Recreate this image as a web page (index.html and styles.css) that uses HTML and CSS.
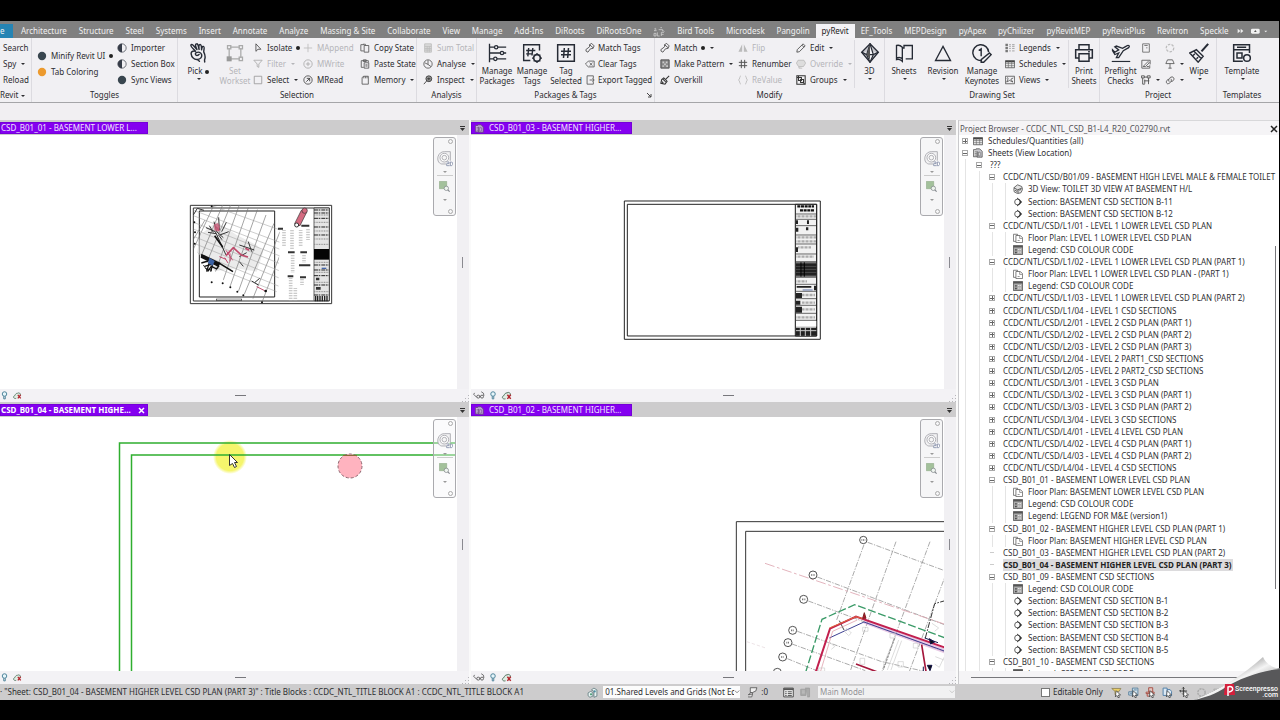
FILE: index.html
```html
<!DOCTYPE html>
<html lang="en">
<head>
<meta charset="utf-8">
<title>Revit - CCDC_NTL_CSD</title>
<link rel="stylesheet" href="styles.css">
</head>
<body>
<svg class="defs" aria-hidden="true">
  <symbol id="half" viewBox="0 0 24 24"><circle cx="12" cy="12" r="10" fill="none" stroke="#555a63" stroke-width="2"/><path d="M12 2a10 10 0 0 0 0 20z" fill="#363c48"/></symbol>
  <symbol id="dark" viewBox="0 0 24 24"><circle cx="12" cy="12" r="10" fill="#39464f"/></symbol>
  <symbol id="orange" viewBox="0 0 24 24"><circle cx="12" cy="12" r="10" fill="#ec9a2e"/></symbol>
  <symbol id="pick" viewBox="0 0 48 56"><path d="M17 23C11 16 3 11 4 6c2-4 6-1 9 3l8 9C17 10 15 3 20 2c4-1 5 8 7 16-1-9-1-14 3-14s4 7 4 15c1-7 3-11 6-9 3 1 0 9 0 15 3 6 5 14 3 20-1 3-1 5 0 8M17 23C8 21 4 25 5 31c1 9 8 16 17 15 9 0 14-7 12-14-2-6-9-8-15-5-4 2-2 8 2 8 3 0 5-1 6-3M22 46l6 5" fill="none" stroke="#262b35" stroke-width="4" stroke-linecap="round" stroke-linejoin="round"/></symbol>
  <symbol id="workset" viewBox="0 0 24 24"><path d="M5 6v12M19 6v12M6 5h12M6 19h12M3 3h4v4H3zM17 3h4v4h-4zM17 17h4v4h-4z" fill="none" stroke="#aaa" stroke-width="1.5"/><path d="M2 16h6v6H2z" fill="#999"/></symbol>
  <symbol id="arrow" viewBox="0 0 24 24"><path d="M7 2v18l5-5h7z" fill="none" stroke="#444" stroke-width="2"/></symbol>
  <symbol id="filter" viewBox="0 0 24 24"><path d="M2 3h20l-8 9v8l-4-2v-6z" fill="none" stroke="#aaa" stroke-width="2"/></symbol>
  <symbol id="box" viewBox="0 0 24 24"><path d="M3 3h18v18H3z" fill="none" stroke="#999" stroke-width="2"/></symbol>
  <symbol id="plus" viewBox="0 0 24 24"><path d="M12 2v20M2 12h20" stroke="#bbb" stroke-width="2"/></symbol>
  <symbol id="cplus" viewBox="0 0 24 24"><circle cx="12" cy="12" r="10" fill="none" stroke="#aaa" stroke-width="2"/><path d="M12 7v10M7 12h10" stroke="#aaa" stroke-width="2"/></symbol>
  <symbol id="cread" viewBox="0 0 24 24"><circle cx="12" cy="12" r="10" fill="none" stroke="#444" stroke-width="2"/><path d="M8 16l8-8M9 8h7v7" fill="none" stroke="#333" stroke-width="2"/></symbol>
  <symbol id="copy" viewBox="0 0 24 24"><path d="M9 4H2v15h7M10 6h11v16H10zM7 3h6v3" fill="none" stroke="#555" stroke-width="2"/></symbol>
  <symbol id="paste" viewBox="0 0 24 24"><path d="M9 20H3V4h17v4M8 2h7v4H8zM10 9h11v13H10zM13 14h5M13 17h5" fill="none" stroke="#555" stroke-width="2"/></symbol>
  <symbol id="memory" viewBox="0 0 24 24"><path d="M5 6l4-3h11v19H5zM9 3v5M13 3v5M17 3v5" fill="none" stroke="#555" stroke-width="2"/></symbol>
  <symbol id="sum" viewBox="0 0 24 24"><path d="M4 2h16v20H4zM4 8h16M10 8v14M15 8v14M4 13h16M4 17h16" fill="#ddd" stroke="#bbb" stroke-width="2"/></symbol>
  <symbol id="analyse" viewBox="0 0 24 24"><circle cx="12" cy="12" r="10" fill="none" stroke="#555" stroke-width="2"/><path d="M12 3v10l7 5M12 13l-8-4" fill="none" stroke="#555" stroke-width="2"/></symbol>
  <symbol id="inspect" viewBox="0 0 24 24"><circle cx="14" cy="9" r="7" fill="#999" stroke="#333" stroke-width="2"/><path d="M9 14l-7 8M10 9h8M14 6v7" stroke="#333" stroke-width="2"/></symbol>
  <symbol id="packages" viewBox="0 0 24 24"><path d="M3 1v22M3 5h20M3 12h20M3 19h20" stroke="#262b35" stroke-width="1.6"/><g fill="#f1f0f3" stroke="#262b35" stroke-width="1.5"><circle cx="11" cy="5" r="2"/><circle cx="18" cy="12" r="2"/><circle cx="10" cy="19" r="2"/></g></symbol>
  <symbol id="mtags" viewBox="0 0 24 24"><path d="M10 21H2V2h19v7M8 6L7 16M13 6l-1 9M5 9h11M5 13h8" fill="none" stroke="#262b35" stroke-width="1.7"/><circle cx="18" cy="18" r="4" fill="none" stroke="#262b35" stroke-width="2"/><path d="M18 12v2M18 22v2M12 18h2M22 18h2M14 14l1 1M21 21l1 1M14 22l1-1M21 15l1-1" stroke="#262b35" stroke-width="1.5"/></symbol>
  <symbol id="tagsel" viewBox="0 0 24 24"><path d="M2 2h20v20H2zM10 6L9 18M15 6l-1 12M6 10h12M6 14h12" fill="none" stroke="#262b35" stroke-width="1.8"/></symbol>
  <symbol id="brush" viewBox="0 0 24 24"><path d="M11 4l5-3 6 6-3 6-6 1-6 8-4-2-1-4 9-7zM11 4l9 8" fill="none" stroke="#444" stroke-width="2"/></symbol>
  <symbol id="clear" viewBox="0 0 24 24"><path d="M8 5h14v14H8l-7-7zM11 9l7 7M18 9l-7 7" fill="none" stroke="#555" stroke-width="2"/></symbol>
  <symbol id="export" viewBox="0 0 24 24"><path d="M20 9V2H5v20h15v-7M11 12h11M18 8l4 4-4 4" fill="none" stroke="#555" stroke-width="2"/></symbol>
  <symbol id="pattern" viewBox="0 0 24 24"><path d="M2 2h20v20H2z" fill="#888" stroke="#444" stroke-width="2"/><path d="M6 6h4v4H6zM14 6h4v4h-4zM10 11h4v4h-4zM6 15h3v4H6zM15 15h4v4h-4z" fill="#ccc"/></symbol>
  <symbol id="broom" viewBox="0 0 24 24"><path d="M22 2l-8 8M9 7l8 8-5 7-10-2 2-9zM7 10l8 8M5 16l3 4" fill="none" stroke="#333" stroke-width="2.5"/></symbol>
  <symbol id="flip" viewBox="0 0 24 24"><path d="M10 3v18H1zM14 3v18h9z" fill="#bbb"/></symbol>
  <symbol id="hash" viewBox="0 0 24 24"><path d="M8 2v20M16 2v20M2 8h20M2 16h20" stroke="#555" stroke-width="2.4"/></symbol>
  <symbol id="braces" viewBox="0 0 24 24"><path d="M7 2C3 2 5 12 1 12c4 0 2 10 6 10M17 2c4 0 2 10 6 10-4 0-2 10-6 10" fill="none" stroke="#bbb" stroke-width="2"/></symbol>
  <symbol id="pencil" viewBox="0 0 24 24"><path d="M17 2l5 5L8 21l-6 1 1-6zM14 5l5 5" fill="none" stroke="#444" stroke-width="2"/></symbol>
  <symbol id="override" viewBox="0 0 24 24"><path d="M5 3h14l4 7-5 8H6L1 10zM7 18v4h8" fill="#ddd" stroke="#bbb" stroke-width="2"/></symbol>
  <symbol id="groups" viewBox="0 0 24 24"><path d="M2 2h20v20H2zM6 6h7v7H6zM11 11h7v7h-7zM1 6h4M6 1v4M19 23v-4" fill="none" stroke="#333" stroke-width="2.5"/></symbol>
  <symbol id="d3" viewBox="0 0 24 24"><path d="M12 1l10 10-10 12L2 11z" fill="#c9c9cf" stroke="#262b35" stroke-width="1.6"/><path d="M12 1L8 14l4 9 4-9zM2 11l6 3h8l6-3" fill="#f4f4f7" stroke="#262b35" stroke-width="1.5"/><path d="M12 1L8 14l4 6z" fill="#555"/></symbol>
  <symbol id="sheets" viewBox="0 0 24 24"><path d="M3 3c3-1 5 0 7 2v14c-2-2-4-2-7-1zM10 6h2V3h10v16h-8M10 19v3c-2-2-4-3-7-2v-3" fill="none" stroke="#262b35" stroke-width="1.6"/></symbol>
  <symbol id="tri" viewBox="0 0 24 24"><path d="M12 4l9 17H3z" fill="none" stroke="#262b35" stroke-width="1.6"/></symbol>
  <symbol id="keynote" viewBox="0 0 24 24"><path d="M12 21A9.500 9.500 0 1 1 20 11M8 9l3-2v9M21 12l2 2-9 9h-3v-3z" fill="none" stroke="#262b35" stroke-width="1.7"/></symbol>
  <symbol id="legends" viewBox="0 0 24 24"><path d="M1 2h6v5H1zM1 9h6v6H1zM1 17h6v5H1z" fill="#777"/><path d="M10 4h4M10 8h4M10 13h4M10 19h4M17 4h6M17 8h6M17 13h6M17 19h6" stroke="#777" stroke-width="1.500"/></symbol>
  <symbol id="sched" viewBox="0 0 24 24"><path d="M1 4h22v17H1z" fill="#eee" stroke="#555" stroke-width="2"/><path d="M1 6h22" stroke="#444" stroke-width="4"/><path d="M1 11h22M1 16h22M8 6v15M16 6v15" stroke="#666" stroke-width="1.5"/></symbol>
  <symbol id="views" viewBox="0 0 24 24"><path d="M1 3h22v18H1zM4 8c2-3 4-1 3 2l-3 7 7-4 8 4-5-7 6-3" fill="none" stroke="#555" stroke-width="2"/></symbol>
  <symbol id="print" viewBox="0 0 24 24"><path d="M6 8V2h12v6M6 18H2V8h20v10h-4M6 13h12v9H6zM17 10.500h2" fill="none" stroke="#262b35" stroke-width="1.8"/></symbol>
  <symbol id="plane" viewBox="0 0 26 24"><path d="M1 23h24" stroke="#262b35" stroke-width="1.5"/><path d="M2 9l3 5 5-2-3 6h3l6-9 7-4c2-2 0-4-3-2l-5 3-8-3-2 1 5 4-5 3-3-3z" fill="none" stroke="#262b35" stroke-width="1.7"/></symbol>
  <symbol id="doc" viewBox="0 0 24 24"><path d="M4 2h16v20H4zM8 6h8M14 10v3" fill="none" stroke="#666" stroke-width="2"/></symbol>
  <symbol id="note" viewBox="0 0 24 24"><path d="M2 3h20v10M2 3v19h19v-7M5 18L17 6l3 3-9 9zM14 18h5" fill="none" stroke="#555" stroke-width="2"/></symbol>
  <symbol id="nodes" viewBox="0 0 24 24"><path d="M1 2h7v5H1zM15 2h7v5h-7zM4 7v15h5M18 7v15M8 5h7M8 14h12M9 11v10" fill="none" stroke="#555" stroke-width="2.200"/></symbol>
  <symbol id="ring" viewBox="0 0 24 24"><circle cx="12" cy="12" r="9" fill="none" stroke="#bbb" stroke-width="3" stroke-dasharray="6 3"/></symbol>
  <symbol id="lamp" viewBox="0 0 24 24"><path d="M6 2h12l4 9H2zM12 11v11M8 22h8" fill="none" stroke="#555" stroke-width="2"/></symbol>
  <symbol id="link" viewBox="0 0 24 24"><path d="M10 16c-4-5 3-13 9-11 6 4 0 12-5 10M14 9c4 5-2 12-8 12-6-3-1-11 3-10" fill="none" stroke="#555" stroke-width="2.200"/></symbol>
  <symbol id="wipe" viewBox="0 0 24 24"><path d="M23 1l-8 9" stroke="#262b35" stroke-width="2.5"/><path d="M9 8l8 8-6 7L1 12zM6 10l9 9M5 15l2-2M9 19l2-2" fill="none" stroke="#262b35" stroke-width="1.700"/></symbol>
  <symbol id="template" viewBox="0 0 24 24"><path d="M13 22H2V2h19v10M2 8h19M6 5h11M6 12h6v6H6z" fill="none" stroke="#262b35" stroke-width="1.800"/><circle cx="18" cy="18" r="4" fill="none" stroke="#262b35" stroke-width="1.800"/></symbol>
  <symbol id="t-sheet" viewBox="0 0 24 24"><path d="M1 4h10v17H1z" fill="#ddd" stroke="#555" stroke-width="2"/><path d="M7 2h9l6 6v14H10V8" fill="#c8c8ce" stroke="#555" stroke-width="2"/><path d="M13 10h4v9h-4zM4 9h5M4 13h5M4 17h5" fill="#fff" stroke="#555" stroke-width="1.500"/></symbol>
  <symbol id="t-3d" viewBox="0 0 24 24"><path d="M3 8l8-6 10 4 2 7-4 8-8 2-8-4-1-6z" fill="#e4e4e4" stroke="#555" stroke-width="2"/><path d="M2 9l9 5 10-4M5 15l5 3M12 14v8M15 15l5-2" fill="none" stroke="#444" stroke-width="2"/></symbol>
  <symbol id="t-sec" viewBox="0 0 24 24"><circle cx="11" cy="12" r="7" fill="#fff" stroke="#444" stroke-width="2"/><path d="M10 1l12 11-12 11v-4c8-3 8-11 0-14z" fill="#333"/></symbol>
  <symbol id="t-plan" viewBox="0 0 24 24"><path d="M7 20H1V3h10v3M7 6h10l6 5v12H7z" fill="#fff" stroke="#666" stroke-width="2"/><path d="M16 7v6h6M11 18h5" fill="none" stroke="#777" stroke-width="1.800"/></symbol>
  <symbol id="t-leg" viewBox="0 0 24 24"><path d="M1 1h22v22H1z" fill="#aaa" stroke="#555" stroke-width="2"/><path d="M1 4h22" stroke="#555" stroke-width="4"/><path d="M5 10h4v3H5zM5 16h4v4H5z" fill="#444"/><path d="M12 11h8M12 17h8" stroke="#f3f3f3" stroke-width="2" stroke-dasharray="3 1"/></symbol>
  <symbol id="bulb" viewBox="0 0 24 24"><circle cx="12" cy="8" r="6" fill="#e6f5fa" stroke="#477f96" stroke-width="2.500"/><path d="M10 14v7h4v-7" fill="none" stroke="#477f96" stroke-width="2.500"/></symbol>
  <symbol id="crop" viewBox="0 0 28 24"><path d="M10 21c-8 2-12-6-4-9 2-5 4-7 8-7 5-3 10 0 9 6" fill="#e1eee4" stroke="#4e6f5d" stroke-width="2.500"/><path d="M15 10l9 11M24 10l-9 11" stroke="#b3262e" stroke-width="4"/></symbol>
  <symbol id="glasses" viewBox="0 0 30 24"><path d="M3 5l-2 4 8 8M21 2l6 4 1 7M16 14h3" fill="none" stroke="#444" stroke-width="2"/><circle cx="13" cy="15" r="4" fill="none" stroke="#444" stroke-width="2"/><circle cx="23" cy="15" r="4" fill="none" stroke="#444" stroke-width="2"/></symbol>
  <symbol id="wheel" viewBox="0 0 48 48"><path d="M27 39H14C3 37 1 25 3 17 6 7 13 2 22 2h18v27" fill="#f2f2f3" stroke="#a2a2a8" stroke-width="2.500"/><circle cx="22" cy="20" r="13" fill="#fff" stroke="#a2a2a8" stroke-width="2.500"/><circle cx="22" cy="20" r="7" fill="#f6f6f6" stroke="#a2a2a8" stroke-width="2.500"/><path d="M29 33h7v5h-7v6h9M40 33h4l3 3v5l-3 3h-4z" fill="#fff" stroke="#8089a5" stroke-width="2.500"/></symbol>
  <symbol id="zoomg" viewBox="0 0 30 30"><path d="M1 1h20v20H1z" fill="#a3c19b" stroke="#8aa581" stroke-width="1.500"/><circle cx="20" cy="20" r="6" fill="#eef4ee" stroke="#81868b" stroke-width="2"/><path d="M24 24l5 5" stroke="#81868b" stroke-width="3"/></symbol>
  <symbol id="team" viewBox="0 0 30 30"><path d="M12 8l7-5 8 5v17l-8 3V12z" fill="#e8f3f2" stroke="#557176" stroke-width="2"/><path d="M3 16l7-4 6 3v10l-8 3-5-4z" fill="#e8f3f2" stroke="#557176" stroke-width="2"/><circle cx="11" cy="20" r="3" fill="#4e9d79"/><circle cx="21" cy="12" r="3" fill="#4b8fa5"/></symbol>
  <symbol id="req" viewBox="0 0 30 30"><path d="M9 2h18l-3 9-9 4H9zM10 15l-5 6M14 15l1 4-12 2M15 19l-2 8H3" fill="#eee" stroke="#444" stroke-width="2"/></symbol>
  <symbol id="opt" viewBox="0 0 30 30"><path d="M2 3h26v24H2z" fill="#f2f2f2" stroke="#444" stroke-width="2.500"/><path d="M2 6h26" stroke="#555" stroke-width="5"/><path d="M6 13h4M13 13h11M6 18h4M13 18h11M6 23h4M13 23h11" stroke="#444" stroke-width="2.500"/></symbol>
  <symbol id="optg" viewBox="0 0 30 30"><path d="M2 6h14v17H2zM14 3h12v24h-6" fill="#aaa" stroke="#999" stroke-width="2"/><path d="M5 11h8M5 16h8" stroke="#ccc" stroke-width="2"/></symbol>
  <symbol id="s1" viewBox="0 0 30 30"><path d="M2 4h25l-5 8h-5v9h-6v-9z" fill="#ebcf65" stroke="#87794d" stroke-width="2"/></symbol>
  <symbol id="s2" viewBox="0 0 30 30"><path d="M12 3h15v20H12zM2 13h10v9H2zM16 8h8M5 17h19" fill="#cfe1ec" stroke="#567f9c" stroke-width="2.500"/></symbol>
  <symbol id="s3" viewBox="0 0 30 30"><path d="M10 2h11v12H10zM3 14h22v4H3zM6 18v7h5" fill="#e5c5bf" stroke="#a64d43" stroke-width="2.500"/></symbol>
  <symbol id="s4" viewBox="0 0 30 30"><path d="M3 3h11v20H3zM14 7h8l4 5v12H14" fill="#dce9f4" stroke="#4a7ba6" stroke-width="2.500"/></symbol>
  <symbol id="s5" viewBox="0 0 30 30"><path d="M12 1v20M2 11h20M9 4l3-3 3 3M5 8l-3 3 3 3M9 18l3 3 3-3" fill="none" stroke="#333" stroke-width="2.500"/></symbol>
  <symbol id="cur" viewBox="0 0 30 30"><path d="M14 10l12 12h-6l3 6-4 1-3-6-4 4z" fill="#fff" stroke="#333" stroke-width="2"/></symbol>
  <symbol id="gear" viewBox="0 0 30 30"><circle cx="15" cy="15" r="10" fill="none" stroke="#aaa" stroke-width="4" stroke-dasharray="6 2"/></symbol>
  <symbol id="funnel" viewBox="0 0 30 30"><path d="M2 6h26L18 17v9h-6v-9z" fill="#eee" stroke="#999" stroke-width="2"/></symbol>
  <symbol id="menu" viewBox="0 0 7 7"><path d="M1 1.500h5" stroke="#333"/><path d="M1 3h5L3.500 6z" fill="#333"/></symbol>
</svg>

<div class="app">
  <nav class="tabs" aria-label="Ribbon tabs">
    <button class="file">e</button>
    <div class="tablist">
      <button>Architecture</button><button>Structure</button><button>Steel</button><button>Systems</button><button>Insert</button><button>Annotate</button><button>Analyze</button><button>Massing &amp; Site</button><button>Collaborate</button><button>View</button><button>Manage</button><button>Add-Ins</button><button>DiRoots</button><button>DiRootsOne</button><button aria-label="Add-in"><svg width="12" height="12" viewBox="0 0 36 36"><path d="M4 12c6-6 6 4 0 5h7M17 14h12v5M22 8h5M3 25h6v8H3zM13 22v11h7M25 33V22h8M25 28h7M30 16l4 4" fill="none" stroke="#ddd" stroke-width="2"/></svg></button><button>Bird Tools</button><button>Microdesk</button><button>Pangolin</button><button class="on">pyRevit</button><button>EF_Tools</button><button>MEPDesign</button><button>pyApex</button><button>pyChilizer</button><button>pyRevitMEP</button><button>pyRevitPlus</button><button>Revitron</button><button>Speckle</button>
    </div>
    <div class="tabend">
      <svg width="32" height="10" viewBox="0 0 96 30"><path d="M2 8l8 7-8 7zM11 8l8 7-8 7zM82 14h9l-5 5z" fill="#eee"/><rect x="42" y="8" width="26" height="15" rx="4" fill="#f1f1f1"/><path d="M51 18l4-6 4 6z" fill="#555"/></svg>
    </div>
  </nav>

  <div class="ribbon">
    <section class="group g-py">
      <div class="cols"><div class="col"><button>Search</button><button>Spy <i class="dd"></i></button><button>Reload</button></div></div>
      <h2>Revit <i class="dd"></i></h2>
    </section>
    <section class="group g-tog">
      <div class="cols">
        <div class="col mid"><button><svg><use href="#dark"/></svg>Minify Revit UI <i class="dot"></i></button><button><svg><use href="#orange"/></svg>Tab Coloring</button></div>
        <div class="col"><button><svg><use href="#half"/></svg>Importer</button><button><svg><use href="#half"/></svg>Section Box</button><button><svg><use href="#dark"/></svg>Sync Views</button></div>
      </div>
      <h2>Toggles</h2>
    </section>
    <section class="group g-sel">
      <div class="cols">
        <button class="big"><svg><use href="#pick"/></svg><span>Pick <i class="dot"></i></span><i class="dd"></i></button>
        <button class="big off"><svg><use href="#workset"/></svg><span>Set<br>Workset</span></button>
        <div class="col"><button><svg><use href="#arrow"/></svg>Isolate <i class="dot"></i></button><button class="off"><svg><use href="#filter"/></svg>Filter <i class="dd"></i></button><button><svg><use href="#box"/></svg>Select <i class="dd"></i></button></div>
        <div class="col"><button class="off"><svg><use href="#plus"/></svg>MAppend</button><button class="off"><svg><use href="#cplus"/></svg>MWrite</button><button><svg><use href="#cread"/></svg>MRead</button></div>
        <div class="col"><button><svg><use href="#copy"/></svg>Copy State</button><button><svg><use href="#paste"/></svg>Paste State</button><button><svg><use href="#memory"/></svg>Memory <i class="dd"></i></button></div>
      </div>
      <h2>Selection</h2>
    </section>
    <section class="group g-ana">
      <div class="cols"><div class="col"><button class="off"><svg><use href="#sum"/></svg>Sum Total</button><button><svg><use href="#analyse"/></svg>Analyse <i class="dd"></i></button><button><svg><use href="#inspect"/></svg>Inspect <i class="dd"></i></button></div></div>
      <h2>Analysis</h2>
    </section>
    <section class="group g-pkg">
      <div class="cols">
        <button class="big"><svg><use href="#packages"/></svg><span>Manage<br>Packages</span></button>
        <button class="big"><svg><use href="#mtags"/></svg><span>Manage<br>Tags</span></button>
        <button class="big"><svg><use href="#tagsel"/></svg><span>Tag<br>Selected</span></button>
        <div class="col"><button><svg><use href="#brush"/></svg>Match Tags</button><button><svg><use href="#clear"/></svg>Clear Tags</button><button><svg><use href="#export"/></svg>Export Tagged</button></div>
      </div>
      <h2>Packages &amp; Tags<svg class="launch" width="5" height="5" viewBox="0 0 5 5"><path d="M0 0l4 4M4 1v3H1" fill="none" stroke="#444"/></svg></h2>
    </section>
    <section class="group g-mod">
      <div class="cols">
        <div class="col"><button><svg><use href="#brush"/></svg>Match <i class="dot"></i> <i class="dd"></i></button><button><svg><use href="#pattern"/></svg>Make Pattern <i class="dd"></i></button><button><svg><use href="#broom"/></svg>Overkill</button></div>
        <div class="col"><button class="off"><svg><use href="#flip"/></svg>Flip</button><button><svg><use href="#hash"/></svg>Renumber</button><button class="off"><svg><use href="#braces"/></svg>ReValue</button></div>
        <div class="col"><button><svg><use href="#pencil"/></svg>Edit <i class="dd"></i></button><button class="off"><svg><use href="#override"/></svg>Override <i class="dd"></i></button><button><svg><use href="#groups"/></svg>Groups <i class="dd"></i></button></div>
        <button class="big rule"><svg><use href="#d3"/></svg><span>3D</span><i class="dd"></i></button>
      </div>
      <h2>Modify</h2>
    </section>
    <section class="group g-draw">
      <div class="cols">
        <button class="big"><svg><use href="#sheets"/></svg><span>Sheets</span><i class="dd"></i></button>
        <button class="big"><svg><use href="#tri"/></svg><span>Revision</span><i class="dd"></i></button>
        <button class="big"><svg><use href="#keynote"/></svg><span>Manage<br>Keynotes</span></button>
        <div class="col"><button><svg><use href="#legends"/></svg>Legends <i class="dd"></i></button><button><svg><use href="#sched"/></svg>Schedules <i class="dd"></i></button><button><svg><use href="#views"/></svg>Views <i class="dd"></i></button></div>
        <button class="big rule"><svg><use href="#print"/></svg><span>Print<br>Sheets</span></button>
      </div>
      <h2>Drawing Set</h2>
    </section>
    <section class="group g-proj">
      <div class="cols">
        <button class="big"><svg><use href="#plane"/></svg><span>Preflight<br>Checks</span></button>
        <div class="col"><button aria-label="Document"><svg><use href="#doc"/></svg></button><button aria-label="Note"><svg><use href="#note"/></svg></button><button aria-label="Nodes"><svg><use href="#nodes"/></svg><i class="dd"></i></button></div>
        <div class="col"><button aria-label="Ring"><svg><use href="#ring"/></svg></button><button aria-label="Lamp"><svg><use href="#lamp"/></svg><i class="dd"></i></button><button aria-label="Link"><svg><use href="#link"/></svg><i class="dd"></i></button></div>
        <button class="big"><svg><use href="#wipe"/></svg><span>Wipe</span><i class="dd"></i></button>
      </div>
      <h2>Project</h2>
    </section>
    <section class="group g-tpl">
      <div class="cols"><button class="big"><svg><use href="#template"/></svg><span>Template</span><i class="dd"></i></button></div>
      <h2>Templates</h2>
    </section>
  </div>
  <div class="options"></div>

  <main class="work">
    <section class="view">
      <header><button class="vtab">CSD_B01_01 - BASEMENT LOWER L...</button><svg class="more"><use href="#menu"/></svg></header>
      <div class="body">
        <div class="canvas">
          <svg class="draw">
            <defs>
              <clipPath id="planclip"><path d="M40 40L170 20 300 70 295 300 245 325 150 275 40 160z"/></clipPath>
            </defs>
            <g transform="translate(180 60) scale(.3333)">
              <path d="M31 31h424v295H31zM40 39h408v279H40z" fill="#fff" stroke="#333" stroke-width="3"/>
              <path d="M58 48h226v258H58z" fill="none" stroke="#222" stroke-width="3"/>
              <g clip-path="url(#planclip)">
                <path d="M60 120l50-40 60 40 60 30 20 20-20 60-60-10-80 10-40-50z" fill="#ddd" opacity=".6"/>
                <path d="M75 75L30 150M104 25L32 180M128 30L50 215M152 30L65 240M178 30L95 262M205 38L122 278M233 42L150 275M258 60L175 290M282 85L192 300M300 110L218 312M300 180L246 322" stroke="#777" stroke-width="2"/>
                <path d="M30 42l270 100M30 58l270 105M30 78l270 105M30 98l270 108M30 120l270 108M30 140l270 110M30 165l270 110M50 195l240 95M90 30l210 75" stroke="#999" stroke-width="1.500"/>
              </g>
              <g fill="none" stroke="#333" stroke-width="3"><path d="M78 98l28 12 32 70M110 110l-8-30M118 105l-2-38M125 110l14-28M120 120l26-10M130 128l-20-18M178 185l22-12M178 150l45 15M205 140l10 30M178 200l12 14M215 258l20 12M225 262l14-12M40 60l12-20 20 6M100 112l-12-20M108 116l-24-4M116 120l10 14M76 220l20 6M70 210l14 20"/></g>
              <path d="M64 176l58 28-6 10-54-26z" fill="#111"/>
              <path d="M74 214l26-8 16 8-6 8-16-8-10 14" fill="none" stroke="#111" stroke-width="4"/>
              <path d="M84 198l-20 6M88 202l-8 28M98 208l-6 22" stroke="#111" stroke-width="4"/>
              <path d="M115 203l44 27M104 122l24 34" stroke="#111" stroke-width="5"/>
              <path d="M88 188l16 10-6 14-14-8z" fill="#3b62a5"/>
              <g fill="none" stroke="#c0486a"><path d="M138 182l22-24 24 22 20 6M108 95l10 12M196 160l12 6" stroke-width="5"/><path d="M134 188l10 16M150 175v24M118 185l20 8M138 166l20 30M230 275l24 12" stroke-width="3"/></g>
              <path d="M102 88l12-4 6 10-5 16-12-4z" fill="#c75c79" opacity=".8"/>
              <g fill="#111"><circle cx="45" cy="112" r="3"/><circle cx="44" cy="146" r="3"/><circle cx="43" cy="82" r="3"/><circle cx="128" cy="265" r="3"/><circle cx="151" cy="277" r="3"/><circle cx="172" cy="290" r="3"/><circle cx="190" cy="301" r="3"/><circle cx="246" cy="322" r="3"/><circle cx="257" cy="288" r="4"/><circle cx="95" cy="262" r="3"/><circle cx="95" cy="34" r="3"/></g>
              <path d="M364 46l16 6-20 40-16-6z" fill="#d46a80" stroke="#333" stroke-width="2"/><circle cx="374" cy="47" r="8" fill="#d46a80" stroke="#333" stroke-width="2"/><circle cx="350" cy="90" r="6" fill="#fff" stroke="#333" stroke-width="3"/>
              <path d="M364 92h24M294 101h15M324 172h20M361 172h20M357 211h34M323 244h17M360 247h18M108 314h78" stroke="#333" stroke-width="6"/>
              <path d="M110 314h74" stroke="#ddd" stroke-width="3"/>
              <g stroke="#bbb" stroke-width="11" stroke-dasharray="2 3"><path d="M312 106v50M336 105v57M362 106v50M384 102v34M338 180v54M372 180v25M332 250v66M366 252v20M346 280v36"/></g>
              <path d="M402 39h46v278h-46z" fill="#e5e5e5" stroke="#222" stroke-width="2"/>
              <path d="M402 162h45v32h-45z" fill="#050505"/>
              <g stroke="#222" stroke-width="3"><path d="M402 45h45M402 54h45M402 70h45M402 96h45M402 120h45M402 210h45M402 225h45M402 242h45M402 270h45M402 300h45" stroke-dasharray="12 2 5 3"/><path d="M402 60h45M402 82h45M402 108h45M402 132h45M402 148h45M402 202h45M402 232h45M402 262h45M402 290h45" stroke="#888" stroke-dasharray="3 2"/><path d="M407 303v16M413 303v16M420 303v16M427 303v16M434 303v16M441 303v16" stroke-width="4"/><path d="M408 248h10v8h-10zM408 276h14v8h-14z" fill="#333" stroke="none"/></g>
              <path d="M425 220h14" stroke="#4566aa" stroke-width="4"/>
            </g>
          </svg>
          <div class="navbar"><button aria-label="Close"></button><button aria-label="Steering wheel"><svg width="16" height="16"><use href="#wheel"/></svg><i class="dd"></i></button><button aria-label="Zoom"><svg width="11" height="11"><use href="#zoomg"/></svg><i class="dd"></i></button><button aria-label="Options"></button></div>
        </div>
        <div class="vbar"></div>
      </div>
      <footer><span class="vc l"><svg><use href="#bulb"/></svg><svg><use href="#crop"/></svg></span><i class="grip"></i><i class="corner"></i></footer>
    </section>

    <section class="view wide">
      <header><button class="vtab ic"><svg><use href="#t-sheet"/></svg>CSD_B01_03 - BASEMENT HIGHER...</button><svg class="more"><use href="#menu"/></svg></header>
      <div class="body">
        <div class="canvas">
          <svg class="draw">
            <g transform="translate(129 -15) scale(.3333)">
              <path d="M73 243h588v415H73zM82 253h568v395H82z" fill="#fff" stroke="#222" stroke-width="3"/>
              <path d="M586 253h64v395h-64z" fill="#f2f2f2" stroke="#111" stroke-width="3"/>
              <path d="M588 427h61v43h-61z" fill="#444"/><path d="M588 435h61M588 444h61M588 453h61M588 462h61M603 427v43M613 427v43" stroke="#000" stroke-width="3"/>
              <path d="M588 282h61M588 298h61M588 317h61M588 345h61M588 372h61M588 402h61M588 425h61M588 472h61M588 493h61M588 514h61M588 536h61M588 556h61M588 580h61M588 601h61M588 621h61" stroke="#222" stroke-width="2"/>
              <g stroke="#888" stroke-width="7" stroke-dasharray="2 2"><path d="M590 289h58M590 352h58M590 364h58M595 382h40M590 410h50M590 484h30M606 525h38M606 548h38M606 568h38M590 592h54"/></g>
              <path d="M592 259h50M600 271h44" stroke="#111" stroke-width="7" stroke-dasharray="9 2"/>
              <path d="M588 323h7v12h-7zM618 322h7v9h-7zM588 382h6v14h-6zM621 301h6v11h-6zM588 301h6v11h-6zM588 519h18v15h-18zM588 542h13v12h-13zM588 560h18v18h-18zM642 497h8v14h-8zM590 498h44v5h-44zM588 624h61v23h-61z" fill="#222"/>
              <path d="M588 632h61M601 622v26M616 622v26M632 622v26" stroke="#ccc" stroke-width="3"/>
              <path d="M608 510h30" stroke="#6375ac" stroke-width="3"/><path d="M588 603h61v17h-61z" fill="#fff"/>
            </g>
          </svg>
          <div class="navbar"><button aria-label="Close"></button><button aria-label="Steering wheel"><svg width="16" height="16"><use href="#wheel"/></svg><i class="dd"></i></button><button aria-label="Zoom"><svg width="11" height="11"><use href="#zoomg"/></svg><i class="dd"></i></button><button aria-label="Options"></button></div>
        </div>
        <div class="vbar"></div>
      </div>
      <footer><span class="vc"><svg><use href="#glasses"/></svg><svg><use href="#bulb"/></svg><svg><use href="#crop"/></svg></span><i class="grip"></i><i class="corner"></i></footer>
    </section>

    <section class="view">
      <header><button class="vtab cur">CSD_B01_04 - BASEMENT HIGHE... <svg width="7" height="7" viewBox="0 0 7 7"><path d="M1 1l5 5M6 1L1 6" stroke="#fff" stroke-width="1.500"/></svg></button><svg class="more"><use href="#menu"/></svg></header>
      <div class="body">
        <div class="canvas">
          <svg class="draw">
            <defs><radialGradient id="glow"><stop offset=".8" stop-color="#f5f56c"/><stop offset="1" stop-color="#f5f56c" stop-opacity="0"/></radialGradient></defs>
            <circle cx="230" cy="40" r="17" fill="url(#glow)"/>
            <path d="M456 26H119.500v300M456 38H131.500v300" fill="none" stroke="#2fae2f" stroke-width="1.500"/>
            <circle cx="350" cy="49" r="12" fill="#ffb3bf" stroke="#8d6870" stroke-dasharray="3 2"/>
            <path d="M343 38.500h14" stroke="#8a6a3a"/>
            <path d="M229.500 37.500v11l3-2 2 4 2-1-2-4h3z" fill="#fff" stroke="#333"/>
          </svg>
          <div class="navbar clear"><button aria-label="Close"></button><button aria-label="Steering wheel"><svg width="16" height="16"><use href="#wheel"/></svg><i class="dd"></i></button><button aria-label="Zoom"><svg width="11" height="11"><use href="#zoomg"/></svg><i class="dd"></i></button><button aria-label="Options"></button></div>
        </div>
        <div class="vbar"></div>
      </div>
      <footer><span class="vc l"><svg><use href="#bulb"/></svg><svg><use href="#crop"/></svg></span><i class="grip"></i><i class="corner"></i></footer>
    </section>

    <section class="view wide">
      <header><button class="vtab ic"><svg><use href="#t-sheet"/></svg>CSD_B01_02 - BASEMENT HIGHER...</button><svg class="more"><use href="#menu"/></svg></header>
      <div class="body">
        <div class="canvas">
          <svg class="draw">
            <g transform="translate(249 93) scale(.3333)" fill="none">
              <path d="M49 520V35h660M77 520V64h620" stroke="#333" stroke-width="3"/>
              <g stroke="#9a9a9a" stroke-width="2.500" stroke-dasharray="16 4 4 4"><path d="M443 97l250 92M292 201l400 150M265 273l430 160M232 364l250 90 130 30M216 402l220 80M202 446l110 45M432 104L350 330M528 95L392 480M630 95L480 500M690 160L566 490"/></g>
              <path d="M135 160L690 348" stroke="#dda5b0" stroke-width="2.500" stroke-dasharray="30 8 8 8"/><path d="M80 395l60 20" stroke="#e3d5da" stroke-width="2" stroke-dasharray="10 6"/>
              <path d="M256 490l50-162 98-44 280 103" stroke="#3a9a67" stroke-width="4" stroke-dasharray="24 8"/>
              <path d="M433 334l250 92" stroke="#d9a6d4" stroke-width="14" opacity=".6"/>
              <path d="M328 384l104-48 260 94" stroke="#3c3f92" stroke-width="3"/>
              <path d="M358 332l14 28" stroke="#444" stroke-width="3"/>
              <path d="M286 490l44-134 78-36 282 98" stroke="#c21f4e" stroke-width="6"/><path d="M300 490l38-126 74-34" stroke="#d9909c" stroke-width="2"/><path d="M328 354l80-34 20 6" stroke="#e0693e" stroke-width="3"/>
              <path d="M408 462l75 28M605 404l14 86" stroke="#a5173c" stroke-width="5"/>
              <path d="M428 325l5-17 5 17z" fill="#a5172c" stroke="#802020" stroke-width="3"/>
              <path d="M616 384l28-103 28-8" stroke="#333" stroke-width="3" stroke-dasharray="18 4 5 4"/>
              <path d="M614 384l40 14M628 386l16 10-12 6zM610 470v14M622 466h14l-6 16z" stroke="#15154a" stroke-width="3" fill="#111"/>
              <g stroke="#ccc" stroke-width="2"><path d="M524 385l-34 80M536 390l-34 90M545 392l-32 88M380 355l14 14-8 8-12-12zM428 352h16v12h-16zM510 370h16v14h-16zM420 445h14v18h-14zM534 455h16v16h-16zM580 400h14v14h-14zM646 440l26 10M644 462l14 10 14-30M330 398l14 12-10 8M296 474h18v10h-18zM636 340l20 14-12 10"/></g>
              <path d="M524 385l-34 95" stroke="#888" stroke-width="3" stroke-dasharray="8 3"/>
              <g stroke="#333" stroke-width="2.500" fill="#fff"><circle cx="430" cy="90" r="11"/><circle cx="279" cy="195" r="12"/><circle cx="251" cy="268" r="12"/><circle cx="218" cy="361" r="12"/><circle cx="204" cy="398" r="12"/><circle cx="188" cy="441" r="12"/><circle cx="172" cy="487" r="12"/></g>
              <path d="M424 90h12M273 195h12M246 268h11M213 361h10M199 398h10M183 441h10" stroke="#777" stroke-width="5" stroke-dasharray="3 2"/>
            </g>
          </svg>
          <div class="navbar"><button aria-label="Close"></button><button aria-label="Steering wheel"><svg width="16" height="16"><use href="#wheel"/></svg><i class="dd"></i></button><button aria-label="Zoom"><svg width="11" height="11"><use href="#zoomg"/></svg><i class="dd"></i></button><button aria-label="Options"></button></div>
        </div>
        <div class="vbar"></div>
      </div>
      <footer><span class="vc"><svg><use href="#glasses"/></svg><svg><use href="#bulb"/></svg><svg><use href="#crop"/></svg></span><i class="grip"></i><i class="corner"></i></footer>
    </section>

    <aside class="browser">
      <header><span>Project Browser - CCDC_NTL_CSD_B1-L4_R20_C02790.rvt</span><button aria-label="Close"><svg width="8" height="8" viewBox="0 0 8 8"><path d="M1 1l6 6M7 1L1 7" stroke="#222" stroke-width="1.500"/></svg></button></header>
      <div class="treewrap">
        <div class="tree" role="tree">
          <div class="n0"><b class="ex p"></b><svg><use href="#sched"/></svg><span>Schedules/Quantities (all)</span></div>
          <div class="n0"><b class="ex"></b><svg><use href="#t-sheet"/></svg><span>Sheets (View Location)</span></div>
          <div class="n1"><b class="ex"></b><span>???</span></div>
          <div class="n2"><b class="ex"></b><span>CCDC/NTL/CSD/B01/09 - BASEMENT HIGH LEVEL MALE &amp; FEMALE TOILET</span></div>
          <div class="n3"><svg><use href="#t-3d"/></svg><span>3D View: TOILET 3D VIEW AT BASEMENT H/L</span></div>
          <div class="n3"><svg><use href="#t-sec"/></svg><span>Section: BASEMENT CSD SECTION B-11</span></div>
          <div class="n3"><svg><use href="#t-sec"/></svg><span>Section: BASEMENT CSD SECTION B-12</span></div>
          <div class="n2"><b class="ex"></b><span>CCDC/NTL/CSD/L1/01 - LEVEL 1 LOWER LEVEL CSD PLAN</span></div>
          <div class="n3"><svg><use href="#t-plan"/></svg><span>Floor Plan: LEVEL 1 LOWER LEVEL CSD PLAN</span></div>
          <div class="n3"><svg><use href="#t-leg"/></svg><span>Legend: CSD COLOUR CODE</span></div>
          <div class="n2"><b class="ex"></b><span>CCDC/NTL/CSD/L1/02 - LEVEL 1 LOWER LEVEL CSD PLAN (PART 1)</span></div>
          <div class="n3"><svg><use href="#t-plan"/></svg><span>Floor Plan: LEVEL 1 LOWER LEVEL CSD PLAN - (PART 1)</span></div>
          <div class="n3"><svg><use href="#t-leg"/></svg><span>Legend: CSD COLOUR CODE</span></div>
          <div class="n2"><b class="ex p"></b><span>CCDC/NTL/CSD/L1/03 - LEVEL 1 LOWER LEVEL CSD PLAN (PART 2)</span></div>
          <div class="n2"><b class="ex p"></b><span>CCDC/NTL/CSD/L1/04 - LEVEL 1 CSD SECTIONS</span></div>
          <div class="n2"><b class="ex p"></b><span>CCDC/NTL/CSD/L2/01 - LEVEL 2 CSD PLAN (PART 1)</span></div>
          <div class="n2"><b class="ex p"></b><span>CCDC/NTL/CSD/L2/02 - LEVEL 2 CSD PLAN (PART 2)</span></div>
          <div class="n2"><b class="ex p"></b><span>CCDC/NTL/CSD/L2/03 - LEVEL 2 CSD PLAN (PART 3)</span></div>
          <div class="n2"><b class="ex p"></b><span>CCDC/NTL/CSD/L2/04 - LEVEL 2 PART1_CSD SECTIONS</span></div>
          <div class="n2"><b class="ex p"></b><span>CCDC/NTL/CSD/L2/05 - LEVEL 2 PART2_CSD SECTIONS</span></div>
          <div class="n2"><b class="ex p"></b><span>CCDC/NTL/CSD/L3/01 - LEVEL 3 CSD PLAN</span></div>
          <div class="n2"><b class="ex p"></b><span>CCDC/NTL/CSD/L3/02 - LEVEL 3 CSD PLAN (PART 1)</span></div>
          <div class="n2"><b class="ex p"></b><span>CCDC/NTL/CSD/L3/03 - LEVEL 3 CSD PLAN (PART 2)</span></div>
          <div class="n2"><b class="ex p"></b><span>CCDC/NTL/CSD/L3/04 - LEVEL 3 CSD SECTIONS</span></div>
          <div class="n2"><b class="ex p"></b><span>CCDC/NTL/CSD/L4/01 - LEVEL 4 LEVEL CSD PLAN</span></div>
          <div class="n2"><b class="ex p"></b><span>CCDC/NTL/CSD/L4/02 - LEVEL 4 CSD PLAN (PART 1)</span></div>
          <div class="n2"><b class="ex p"></b><span>CCDC/NTL/CSD/L4/03 - LEVEL 4 CSD PLAN (PART 2)</span></div>
          <div class="n2"><b class="ex p"></b><span>CCDC/NTL/CSD/L4/04 - LEVEL 4 CSD SECTIONS</span></div>
          <div class="n2"><b class="ex"></b><span>CSD_B01_01 - BASEMENT LOWER LEVEL CSD PLAN</span></div>
          <div class="n3"><svg><use href="#t-plan"/></svg><span>Floor Plan: BASEMENT LOWER LEVEL CSD PLAN</span></div>
          <div class="n3"><svg><use href="#t-leg"/></svg><span>Legend: CSD COLOUR CODE</span></div>
          <div class="n3"><svg><use href="#t-leg"/></svg><span>Legend: LEGEND FOR M&amp;E (version1)</span></div>
          <div class="n2"><b class="ex"></b><span>CSD_B01_02 - BASEMENT HIGHER LEVEL CSD PLAN (PART 1)</span></div>
          <div class="n3"><svg><use href="#t-plan"/></svg><span>Floor Plan: BASEMENT HIGHER LEVEL CSD PLAN</span></div>
          <div class="n2"><b class="ex none"></b><span>CSD_B01_03 - BASEMENT HIGHER LEVEL CSD PLAN (PART 2)</span></div>
          <div class="n2"><b class="ex none"></b><span class="sel">CSD_B01_04 - BASEMENT HIGHER LEVEL CSD PLAN (PART 3)</span></div>
          <div class="n2"><b class="ex"></b><span>CSD_B01_09 - BASEMENT CSD SECTIONS</span></div>
          <div class="n3"><svg><use href="#t-leg"/></svg><span>Legend: CSD COLOUR CODE</span></div>
          <div class="n3"><svg><use href="#t-sec"/></svg><span>Section: BASEMENT CSD SECTION B-1</span></div>
          <div class="n3"><svg><use href="#t-sec"/></svg><span>Section: BASEMENT CSD SECTION B-2</span></div>
          <div class="n3"><svg><use href="#t-sec"/></svg><span>Section: BASEMENT CSD SECTION B-3</span></div>
          <div class="n3"><svg><use href="#t-sec"/></svg><span>Section: BASEMENT CSD SECTION B-4</span></div>
          <div class="n3"><svg><use href="#t-sec"/></svg><span>Section: BASEMENT CSD SECTION B-5</span></div>
          <div class="n2"><b class="ex"></b><span>CSD_B01_10 - BASEMENT CSD SECTIONS</span></div>
          <div class="n3"><svg><use href="#t-leg"/></svg><span>Legend: CSD COLOUR CODE</span></div>
        </div>
        <div class="tscroll"><i></i></div>
      </div>
      <div class="hscroll"><i></i></div>
    </aside>
  </main>

  <footer class="status">
    <span class="hint">· "Sheet: CSD_B01_04 - BASEMENT HIGHER LEVEL CSD PLAN (PART 3)" : Title Blocks : CCDC_NTL_TITLE BLOCK A1 : CCDC_NTL_TITLE BLOCK A1</span>
    <svg><use href="#team"/></svg>
    <span class="pickbox"><select aria-label="Active workset"><option>01.Shared Levels and Grids (Not Ed</option></select><svg viewBox="0 0 8 8"><path d="M1 2l3 3 3-3" fill="none" stroke="#666"/></svg></span>
    <svg class="sp1"><use href="#req"/></svg><span>:0</span>
    <svg class="sp2"><use href="#opt"/></svg><svg class="sp3"><use href="#optg"/></svg>
    <span class="pickbox dim"><select aria-label="Design option"><option>Main Model</option></select><svg viewBox="0 0 8 8"><path d="M1 2l3 3 3-3" fill="none" stroke="#bbb"/></svg></span>
    <div class="right">
      <label><input type="checkbox">Editable Only</label>
      <svg><use href="#s1"/><use href="#cur"/></svg><svg><use href="#s2"/><use href="#cur"/></svg><svg><use href="#s3"/><use href="#cur"/></svg><svg><use href="#s4"/><use href="#cur"/></svg><svg><use href="#s5"/><use href="#cur"/></svg><svg><use href="#gear"/></svg><svg><use href="#funnel"/></svg>
    </div>
  </footer>

  <div class="badge">
    <svg width="86" height="48" viewBox="0 0 86 48">
      <defs><linearGradient id="fold" x1="0" y1="0" x2="1" y2="1"><stop offset=".3" stop-color="#8c8c8c"/><stop offset=".52" stop-color="#f4f4f4"/><stop offset=".75" stop-color="#a8a8a8"/></linearGradient></defs>
      <path d="M0 48C26 38 44 22 86 16v32z" fill="#58585a"/>
      <path d="M0 48C28 36 48 24 69 5c2 5 7 10 17 12-16 1-42 10-54 18C22 42 10 46 0 48z" fill="url(#fold)"/>
      <path d="M31 32h9l1 11H30z" fill="#d51f3c"/><path d="M34 44v-9c5-2 7 4 1 5" fill="none" stroke="#fff" stroke-width="1.500"/>
    </svg>
    <p>Screenpresso<br>.com</p>
  </div>
</div>
</body>
</html>
```
FILE: styles.css
```css
* { box-sizing: border-box; }
html, body { height: 100%; }
body { margin: 0; background: #000; padding: 21px 0 20px; font: 8px/12px "Noto Sans", "Open Sans", sans-serif; color: #2c2c30; overflow: hidden; }
.defs { display: none; }
button { border: 0; padding: 0; margin: 0; background: none; font: inherit; color: inherit; display: flex; align-items: center; white-space: nowrap; }
svg { flex: none; }
h2 { margin: 0; font: inherit; }
.app { position: relative; height: 100%; display: flex; flex-direction: column; background: #f1f0f3; margin-right: 1px; }

.tabs { display: flex; height: 17px; background: #808080; color: #f0f0f0; padding-top: 3px; flex: none; }
.tabs .file { background: #2584b4; width: 13px; margin-right: 8px; }
.tablist { flex: 1; display: flex; justify-content: space-between; min-width: 0; }
.tablist .on { background: #f4f3f6; color: #222; padding: 0 6px; margin: 0 -6px; }
.tabend { width: 50px; padding: 2px 0 0 8px; }

.ribbon { flex: none; height: 65px; display: grid; grid-template-columns: 32fr 146fr 239fr 60fr 178fr 230fr 215fr 117fr 62fr; border-bottom: 1px solid #a5a5a8; }
.group { min-width: 0; padding-top: 2px; border-right: 1px solid #dcdbe0; }
.group:last-child { border-right: 0; }
.group h2 { height: 14px; line-height: 14px; text-align: center; position: relative; }
.cols { display: grid; height: 48px; }
.col { display: flex; flex-direction: column; min-width: 0; }
.col.mid { justify-content: center; }
.col button { height: 16px; gap: 4px; }
.col svg { width: 10px; height: 10px; }
.big { flex-direction: column; justify-content: flex-start; padding-top: 3px; line-height: 10px; text-align: center; }
.big svg { width: 20px; height: 20px; margin-bottom: 3px; }
.big .dd { margin-top: 2px; }
.big span { display: block; }
.rule { border-left: 1px solid #dcdbe0; }
.off { color: #b5b5b9; }
.dd { display: inline-block; width: 0; height: 0; border: 2px solid transparent; border-top-color: currentColor; border-bottom: 0; margin-left: 1px; vertical-align: middle; }
.dot { display: inline-block; width: 4px; height: 4px; border-radius: 50%; background: #222; vertical-align: middle; }
.g-py .cols { padding-left: 3px; }
.group.g-py h2 { text-align: left; }
.g-tog .cols { grid-template-columns: 80px 1fr; padding-left: 5px; }
.g-sel .cols { grid-template-columns: 38px 36px 50px 57px 1fr; padding-left: 1px; }
.g-ana .cols { padding-left: 6px; }
.g-pkg .cols { grid-template-columns: 36px 34px 34px 1fr; padding-left: 2px; }
.g-pkg .col { padding-left: 2px; }
.g-pkg .col button { gap: 3px; }
.g-mod .cols { grid-template-columns: 78px 58px 58px 1fr; padding-left: 5px; }
.g-draw .cols { grid-template-columns: 38px 40px 38px 67px 1fr; }
.g-draw .col { padding-left: 4px; }
.g-proj .cols { grid-template-columns: 41px 24px 17px 1fr; }
.g-tpl .cols { padding-right: 12px; }
.g-tpl h2 { padding-right: 12px; }
.launch { position: absolute; right: 2px; bottom: 4px; }
.options { flex: none; height: 17px; background: #f1eff2; }

.work { flex: 1; min-height: 0; display: grid; grid-template-columns: 471fr 487fr 321fr; grid-template-rows: 1fr 1fr; }
.view { display: flex; flex-direction: column; min-width: 0; min-height: 0; border-right: 2px solid #fafafa; box-shadow: inset -1px 0 #d0d0d0; background: #f1f0f3; }
.view header { height: 15px; flex: none; background: #cdcccd; display: flex; justify-content: space-between; padding: 2px 3px 1px 0; align-items: center; }
.vtab { height: 12px; width: 148px; background: #8400f0; color: #f1e3fd; border: 1px solid #7500d8; }
.vtab.ic { width: 161px; padding-left: 3px; gap: 5px; }
.vtab svg { width: 9px; height: 9px; opacity: .8; }
.vtab.cur { font-weight: 700; color: #fff; justify-content: space-between; padding-right: 2px; }
.vtab.cur svg { width: 7px; height: 7px; opacity: 1; }
.more { width: 7px; height: 7px; }
.body { flex: 1; display: flex; min-height: 0; }
.canvas { flex: 1; position: relative; background: #fff; overflow: hidden; }
.draw { width: 100%; height: 100%; display: block; }
.vbar { width: 12px; background: linear-gradient(#8a8a90, #8a8a90) 5px 50% / 1px 11px no-repeat #f1f0f3; }
.navbar { position: absolute; top: 2px; right: 1px; width: 23px; height: 79px; border: 1px solid #aaaaae; border-radius: 3px; background: #f6f6f7; display: flex; flex-direction: column; align-items: center; color: #999; padding: 1px 2px; }
.navbar.clear { background: rgba(246, 246, 247, .4); }
.navbar button:first-child, .navbar button:last-child { align-self: flex-end; width: 5px; height: 5px; border: 1px solid #aaa; border-radius: 50%; }
.navbar button:nth-child(2), .navbar button:nth-child(3) { flex-direction: column; gap: 4px; width: 16px; }
.navbar button:nth-child(2) { height: 32px; padding-top: 7px; border-bottom: 1px solid #ccc; }
.navbar button:nth-child(3) { flex: 1; padding-top: 5px; gap: 7px; }
.navbar .dd { margin: 0; }
.view footer { height: 13px; flex: none; display: flex; align-items: center; position: relative; background: #f3f2f5; }
.vc { display: flex; gap: 2px; padding-left: 2px; }
.vc.l { padding-left: 0; gap: 4px; }
.vc svg { width: 12px; height: 9px; }
.vc.l svg { width: 9px; }
.view footer .grip { position: absolute; left: 50%; bottom: 6px; width: 11px; height: 1px; background: #77777c; }
.wide footer .grip { left: 52%; }
.corner { margin-left: auto; align-self: flex-end; width: 8px; height: 8px; background: radial-gradient(circle, #b6b6ba 1px, transparent 1px) 0 0 / 3px 3px; clip-path: polygon(100% 0, 100% 100%, 0 100%); }

.browser { grid-column: 3; grid-row: 1 / 3; display: flex; flex-direction: column; min-width: 0; min-height: 0; background: #f5f4f6; border-left: 1px solid #c9c9cc; }
.view:nth-child(1) { grid-area: 1 / 1; }
.view:nth-child(2) { grid-area: 1 / 2; }
.view:nth-child(3) { grid-area: 2 / 1; }
.view:nth-child(4) { grid-area: 2 / 2; }
.browser header { height: 15px; flex: none; display: flex; align-items: center; justify-content: space-between; padding: 1px 1px 0; border-top: 1px solid #d8d8da; color: #55555a; }
.treewrap { flex: 1; display: flex; min-height: 0; background: #fff; overflow: hidden; }
.tree { flex: 1; min-width: 0; height: calc(100% + 9px); display: grid; grid-auto-rows: 1fr; color: #303034; }
.tree > div { display: flex; align-items: center; min-height: 0; white-space: nowrap; }
.tree svg { width: 10px; height: 10px; margin-right: 5px; }
.ex { width: 4px; height: 4px; flex: none; outline: 1px solid #aaa; background: linear-gradient(#666, #666) 0 50% / 4px 1px no-repeat; }
.ex.p { background: linear-gradient(#666, #666) 0 50% / 4px 1px no-repeat, linear-gradient(#666, #666) 50% 0 / 1px 4px no-repeat; }
.ex.none { background: linear-gradient(#ccc, #ccc) 0 50% / 4px 1px no-repeat; outline: 0; }
.tree .n0 { padding-left: 4px; }
.n0 .ex { margin-right: 6px; }
.tree .n1 { padding-left: 18px; background: linear-gradient(#e4e4e4, #e4e4e4) 6px 0 / 1px 100% no-repeat; }
.n1 .ex, .n2 .ex { margin-right: 9px; }
.tree .n2 { padding-left: 31px; background: linear-gradient(#e4e4e4, #e4e4e4) 6px 0 / 1px 100% no-repeat, linear-gradient(#e4e4e4, #e4e4e4) 20px 0 / 1px 100% no-repeat; }
.tree .n3 { padding-left: 54px; background: linear-gradient(#e4e4e4, #e4e4e4) 6px 0 / 1px 100% no-repeat, linear-gradient(#e4e4e4, #e4e4e4) 20px 0 / 1px 100% no-repeat, linear-gradient(#e4e4e4, #e4e4e4) 33px 0 / 1px 100% no-repeat, linear-gradient(#e4e4e4, #e4e4e4) 46px 0 / 1px 100% no-repeat; }
.sel { background: #dcdbdd; font-weight: 700; color: #222; padding-right: 1px; }
.tscroll { width: 7px; display: flex; justify-content: center; align-items: flex-start; }
.tscroll i { width: 1px; height: 64%; margin-top: 111px; background: #77777b; }
.hscroll { height: 13px; flex: none; padding: 6px 20px 0 12px; }
.hscroll i { display: block; height: 1px; background: #77777b; }

.status { flex: none; height: 16px; background: #cdcccd; display: flex; align-items: center; }
.status svg { width: 11px; height: 11px; }
.hint { flex: 1; white-space: nowrap; overflow: hidden; }
.pickbox { display: flex; align-items: center; width: 137px; height: 12px; margin-left: 5px; background: #fcfcfc; }
.pickbox select { appearance: none; border: 0; border-radius: 0; flex: 1; min-width: 0; height: 12px; font: inherit; color: inherit; padding: 0 0 0 2px; background: none; }
.status .pickbox svg { width: 6px; height: 8px; }
.status .sp1 { margin: 0 3px 0 7px; }
.status .sp2 { margin: 0 6px 0 15px; }
.status .sp3 { margin: 0; }
.status .dim { color: #929296; margin-left: 7px; background: #f1f1f2; }
.right { width: 324px; padding-left: 86px; display: flex; align-items: center; gap: 6px; }
.right label { display: flex; align-items: center; gap: 3px; margin-right: 2px; white-space: nowrap; }
.right input { appearance: none; width: 9px; height: 9px; margin: 0; border: 1px solid #777; background: #fff; }

.badge { position: absolute; right: -1px; bottom: 0; height: 48px; width: 86px; }
.badge p { position: absolute; right: 2px; bottom: 2px; margin: 0; font: 500 7px/6px Roboto, sans-serif; color: #fff; text-align: right; }
```
